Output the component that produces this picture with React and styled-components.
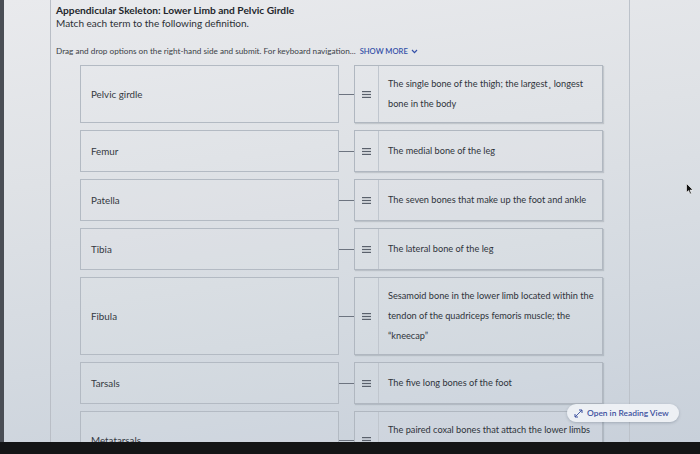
import React from "react";
import styled, { createGlobalStyle } from "styled-components";

const Global = createGlobalStyle`
  html, body { margin: 0; padding: 0; background: #111; }
  body { font-family: Lato, "Open Sans", sans-serif; }
`;

const Screen = styled.div`
  position: relative;
  width: 700px;
  height: 454px;
  display: flex;
  flex-direction: column;
  overflow: hidden;
  background: #121314;
`;

const Display = styled.div`
  flex: 1;
  display: flex;
  min-height: 0;
  overflow: hidden;
  border-left: 4px solid #4a4e55;
  background: linear-gradient(172deg, #e9eaed 0%, #dfe2e6 35%, #d3d9e0 70%, #c8d0da 100%);
`;

const Gutter = styled.div`
  width: 46px;
  flex: none;
`;

const Panel = styled.section`
  width: 580px;
  flex: none;
  border-left: 1px solid #b9bec6;
  border-right: 1px solid #bcc2ca;
  padding: 4px 0 0 5px;
  box-sizing: border-box;
`;

const Title = styled.h1`
  margin: 0;
  font-size: 10.2px;
  line-height: 13px;
  font-weight: 700;
  color: #23262b;
`;

const Subtitle = styled.p`
  margin: 0;
  font-size: 10px;
  line-height: 13px;
  color: #2c3036;
`;

const Instructions = styled.p`
  margin: 16px 0 0;
  font-size: 8.2px;
  line-height: 10px;
  color: #3a3f47;
  display: flex;
  align-items: center;
  gap: 4px;
`;

const ShowMore = styled.span`
  color: #3450a8;
  font-weight: 600;
  font-size: 7.6px;
  display: inline-flex;
  align-items: center;
  gap: 3px;
`;

const Board = styled.div`
  margin: 9px 0 0 24px;
  display: grid;
  grid-template-columns: 259px 15px 249px;
  row-gap: 7px;
`;

const TermBox = styled.div`
  border: 1px solid #b3bac3;
  box-sizing: border-box;
  display: flex;
  align-items: center;
  padding: 0 10px;
  font-size: 9.8px;
  color: #353a42;
  background: rgba(255, 255, 255, 0.06);
`;

const Connector = styled.div`
  display: flex;
  align-items: center;
  &::before {
    content: "";
    display: block;
    width: 100%;
    height: 1px;
    background: #6d7480;
  }
`;

const Card = styled.div`
  display: flex;
  min-height: 42px;
  box-sizing: border-box;
  border: 1px solid #b0b7c0;
  box-shadow: 1px 1px 1px rgba(60, 70, 85, 0.18);
  background: rgba(255, 255, 255, 0.06);
`;

const Handle = styled.div`
  width: 23px;
  flex: none;
  border-right: 1px solid #c0c6ce;
  display: flex;
  align-items: center;
  justify-content: center;
`;

const Definition = styled.div`
  flex: 1;
  padding: 8px 4px 8px 9px;
  font-size: 9.2px;
  line-height: 20px;
  color: #2f343b;
  display: flex;
  align-items: center;
`;

const BottomBar = styled.div`
  height: 12px;
  flex: none;
  background: #141516;
`;

const ReadingPill = styled.div`
  position: absolute;
  left: 567px;
  top: 404px;
  height: 18px;
  padding: 0 10px 0 7px;
  border-radius: 9px;
  background: rgba(238, 241, 246, 0.95);
  box-shadow: 0 1px 3px rgba(40, 50, 70, 0.25);
  display: flex;
  align-items: center;
  gap: 4px;
  font-size: 8.4px;
  font-weight: 600;
  color: #3a4f9e;
`;

const Cursor = styled.svg`
  position: absolute;
  left: 686px;
  top: 183px;
`;

const Hamburger = () => (
  <svg width="9" height="7" viewBox="0 0 9 7">
    <rect x="0" y="0" width="9" height="1.2" fill="#5a616c" />
    <rect x="0" y="2.9" width="9" height="1.2" fill="#5a616c" />
    <rect x="0" y="5.8" width="9" height="1.2" fill="#5a616c" />
  </svg>
);

const Chevron = () => (
  <svg width="7" height="5" viewBox="0 0 7 5">
    <path d="M1 1 L3.5 3.6 L6 1" fill="none" stroke="#3450a8" strokeWidth="1.2" />
  </svg>
);

const Expand = () => (
  <svg width="9" height="9" viewBox="0 0 9 9">
    <path d="M1 8 L8 1" stroke="#3a4f9e" strokeWidth="0.9" />
    <path d="M5 1 H8 V4" fill="none" stroke="#3a4f9e" strokeWidth="1" />
    <path d="M1 5 V8 H4" fill="none" stroke="#3a4f9e" strokeWidth="1" />
  </svg>
);

const rows = [
  ["Pelvic girdle", "The single bone of the thigh; the largest\u00b8 longest bone in the body", 212],
  ["Femur", "The medial bone of the leg"],
  ["Patella", "The seven bones that make up the foot and ankle"],
  ["Tibia", "The lateral bone of the leg"],
  ["Fibula", "Sesamoid bone in the lower limb located within the tendon of the quadriceps femoris muscle; the \u201ckneecap\u201d", 212],
  ["Tarsals", "The five long bones of the foot"],
  ["Metatarsals", "The paired coxal bones that attach the lower limbs to the axial skeleton", 212],
];

export default function App() {
  return (
    <>
      <Global />
      <Screen>
        <Display>
          <Gutter />
          <Panel>
            <Title>Appendicular Skeleton: Lower Limb and Pelvic Girdle</Title>
            <Subtitle>Match each term to the following definition.</Subtitle>
            <Instructions>
              Drag and drop options on the right-hand side and submit. For keyboard navigation...
              <ShowMore>
                SHOW MORE <Chevron />
              </ShowMore>
            </Instructions>
            <Board>
              {rows.map(([term, def, w]) => (
                <React.Fragment key={term}>
                  <TermBox>{term}</TermBox>
                  <Connector />
                  <Card>
                    <Handle>
                      <Hamburger />
                    </Handle>
                    <Definition>
                      <span style={w ? { maxWidth: w } : undefined}>{def}</span>
                    </Definition>
                  </Card>
                </React.Fragment>
              ))}
            </Board>
          </Panel>
        </Display>
        <BottomBar />
        <ReadingPill>
          <Expand />
          Open in Reading View
        </ReadingPill>
        <Cursor width="8" height="12" viewBox="0 0 8 12">
          <path d="M0.5 0.5 L0.5 9.5 L2.6 7.6 L4 11 L5.4 10.4 L4 7.1 L7 7 Z" fill="#111" stroke="#fff" strokeWidth="0.6" />
        </Cursor>
      </Screen>
    </>
  );
}
